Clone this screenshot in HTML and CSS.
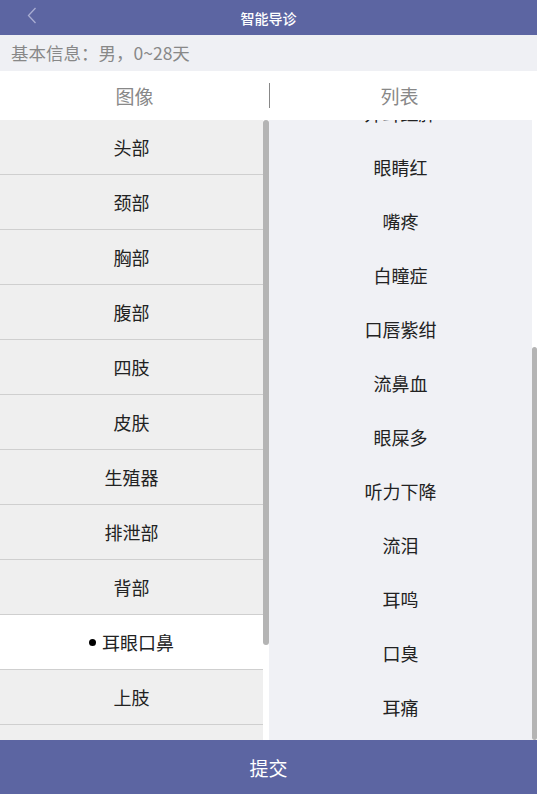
FILE: index.html
```html
<!DOCTYPE html>
<html lang="zh-CN">
<head>
  <meta charset="UTF-8">
  <title>智能导诊</title>
  <link rel="stylesheet" href="styles.css">
</head>
<body>
<div class="page">
  <div class="header">
    <a class="back" href="#">
      <svg width="10" height="17" viewBox="0 0 10 17"><polyline points="8.5,1 1.5,8.5 8.5,16" fill="none" stroke="#a9add2" stroke-width="1.3"/></svg>
    </a>
    <div class="title">智能导诊</div>
    <div class="spacer"></div>
  </div>

  <div class="info">基本信息：男，0~28天</div>

  <div class="tabs">
    <div class="tab tab-left">图像</div>
    <div class="tab-line"></div>
    <div class="tab tab-right">列表</div>
  </div>

  <div class="panes">
    <div class="pane pane-left">
      <ul class="parts" id="parts">
        <li>头部</li>
        <li>颈部</li>
        <li>胸部</li>
        <li>腹部</li>
        <li>四肢</li>
        <li>皮肤</li>
        <li>生殖器</li>
        <li>排泄部</li>
        <li>背部</li>
        <li class="active">耳眼口鼻</li>
        <li>上肢</li>
        <li>下肢</li>
        <li>其他</li>
      </ul>
      <div class="track"><div class="thumb" id="partsThumb"></div></div>
    </div>

    <div class="pane pane-right">
      <ul class="symptoms" id="symptoms">
        <li>耳朵流脓</li>
        <li>鼻塞</li>
        <li>流鼻涕</li>
        <li>打喷嚏</li>
        <li>眼睑肿胀</li>
        <li>斜视</li>
        <li>外耳红肿</li>
        <li>眼睛红</li>
        <li>嘴疼</li>
        <li>白瞳症</li>
        <li>口唇紫绀</li>
        <li>流鼻血</li>
        <li>眼屎多</li>
        <li>听力下降</li>
        <li>流泪</li>
        <li>耳鸣</li>
        <li>口臭</li>
        <li>耳痛</li>
      </ul>
      <div class="track track-right"><div class="thumb" id="symptomsThumb"></div></div>
    </div>
  </div>

  <button class="submit">提交</button>
</div>

<script>
  const parts = document.getElementById('parts');
  const symptoms = document.getElementById('symptoms');

  // 右侧列表滚动到底部
  symptoms.scrollTop = symptoms.scrollHeight;

  // 滚动条位置
  function syncThumb(list, thumb) {
    const h = list.clientHeight;
    const total = list.scrollHeight;
    thumb.style.height = (h * h / total) + 'px';
    thumb.style.marginTop = (list.scrollTop / total * h) + 'px';
  }

  syncThumb(parts, document.getElementById('partsThumb'));
  syncThumb(symptoms, document.getElementById('symptomsThumb'));

  parts.addEventListener('scroll', () => syncThumb(parts, document.getElementById('partsThumb')));
  symptoms.addEventListener('scroll', () => syncThumb(symptoms, document.getElementById('symptomsThumb')));
</script>
</body>
</html>
```

FILE: styles.css
```css
* {
  box-sizing: border-box;
}

body {
  margin: 0;
  font-family: "Noto Sans CJK SC", "Liberation Sans", sans-serif;
  background-color: #f0f1f5;
}

.page {
  display: flex;
  flex-direction: column;
  height: 100vh;
}

.header {
  height: 35px;
  background-color: #5c65a2;
  display: flex;
  align-items: center;
  flex-shrink: 0;
}

.back {
  width: 60px;
  padding-left: 27px;
  display: flex;
  align-items: center;
  margin-top: -4px;
}

.title {
  flex: 1;
  text-align: center;
  color: #fff;
  font-size: 14px;
  font-weight: 500;
}

.spacer {
  width: 60px;
}

.info {
  height: 36px;
  line-height: 36px;
  padding-left: 11px;
  font-size: 17.5px;
  color: #888;
  background-color: #eff0f4;
  flex-shrink: 0;
}

.tabs {
  height: 49px;
  background: #fff;
  display: flex;
  align-items: center;
  flex-shrink: 0;
}

.tab {
  text-align: center;
  font-size: 19px;
  color: #888;
}

.tab-left {
  width: 269px;
}

.tab-right {
  flex: 1;
  padding-right: 8px;
}

.tab-line {
  width: 1px;
  height: 25px;
  background-color: #888;
}

.panes {
  flex: 1;
  display: flex;
  min-height: 0;
}

.pane {
  display: flex;
  min-height: 0;
}

.pane-left {
  width: 269px;
  flex-shrink: 0;
}

.pane-right {
  flex: 1;
}

.pane ul {
  flex: 1;
  list-style: none;
  margin: 0;
  padding: 0;
  overflow: hidden;
}

.track {
  width: 6px;
  background: #fff;
  display: flex;
  flex-direction: column;
}

.track-right {
  width: 5px;
}

.thumb {
  background: #b4b4b4;
  border-radius: 3px;
}

.parts {
  background: #efefef;
  padding-bottom: 17px !important;
}

.parts li {
  height: 55px;
  display: flex;
  align-items: center;
  justify-content: center;
  font-size: 18px;
  color: #222;
  border-bottom: 1px solid #cfcfcf;
}

.parts li.active {
  background: #fff;
}

.parts li.active::before {
  content: "";
  width: 7px;
  height: 7px;
  border-radius: 50%;
  background: #000;
  margin-right: 6px;
}

.symptoms {
  background: #f0f1f5;
  padding-bottom: 6px !important;
}

.symptoms li {
  height: 54px;
  line-height: 54px;
  text-align: center;
  font-size: 18px;
  color: #222;
}

.submit {
  height: 54px;
  flex-shrink: 0;
  border: none;
  background-color: #5c65a2;
  color: #fff;
  font-family: inherit;
  font-size: 19px;
}
```
